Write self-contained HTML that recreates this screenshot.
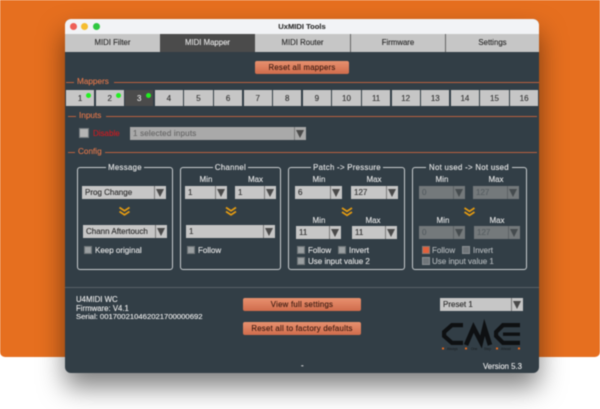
<!DOCTYPE html>
<html><head><meta charset="utf-8">
<style>
html,body{margin:0;padding:0;background:#fff}
body{width:600px;height:409px;position:relative;overflow:hidden;font-family:"Liberation Sans",sans-serif;font-size:7.8px;color:#e8e8e8}
#all{left:0;top:0;width:600px;height:409px;filter:blur(.4px);-webkit-text-stroke:.12px currentColor}
div,span{position:absolute;box-sizing:border-box;white-space:nowrap}
.or{left:0;top:0;width:600px;height:357px;background:#e66f1f;border-radius:0 0 5px 5px}
.win{left:65px;top:19px;width:474px;height:354px;background:#323e46;border-radius:6px;box-shadow:0 14px 26px rgba(0,0,0,.5);overflow:hidden}
.tb{left:65px;top:19px;width:474px;height:15px;background:#f2f3f6;border-radius:6px 6px 0 0;text-align:center;line-height:15px;color:#333;font-weight:bold;font-size:7.6px}
.dot{width:7px;height:7px;border-radius:50%;top:23px}
.tab{top:34px;height:18px;background:#c6c6c6;color:#2b2b2b;text-align:center;line-height:18px;border-left:1px solid #666;font-size:7.8px}
.btn{background:linear-gradient(#e8916f,#cf6c4c);color:#3a1a10;text-align:center;border-radius:2px;line-height:13px;font-size:7.8px;letter-spacing:.25px;height:13px}
.ln{height:1px;background:#b9603f}
.sec{color:#e0764a;font-size:8.2px;line-height:10px}
.m{top:90px;height:16px;width:28.2px;background:#c6c6c6;color:#333;text-align:center;line-height:17px;font-size:8px}
.g{width:5px;height:5px;border-radius:50%;background:#22ee22;top:92.5px}
.s{height:13px;background:#c6c6c6;color:#2c2c2c;line-height:13px;padding-left:3px;font-size:8px}
.s i{position:absolute;right:0;top:0;width:11px;height:13px;background:#c6c6c6;border-left:1px solid #7b7b7b}
.s i:after{content:"";position:absolute;left:1px;top:3px;border-left:4px solid transparent;border-right:4px solid transparent;border-top:8px solid #4a4a4a}
.d{background:#74797b;color:#555c60}
.d i{background:#74797b;border-left-color:#5c6164}
.d i:after{border-top-color:#454b4e}
.box{border:1px solid #c9cdcf;border-radius:3px;top:167px;height:103px}
.lg{top:163px;height:9px;background:#323e46;color:#e8e8e8;text-align:center;line-height:9px;font-size:7.8px;letter-spacing:.3px}
.t{line-height:9px;height:9px;font-size:8px;color:#e6e6e6}
.c{width:8px;height:8px;background:#9a9fa1;border:1.5px solid #6f7578}
.ctr{transform:translateX(-50%)}
svg{position:absolute;left:0;top:0}
</style></head><body><div id="all">
<div class="or"></div>
<div class="win"></div>
<div class="tb">UxMIDI Tools</div>
<div class="dot" style="left:69.5px;background:#ee5f57"></div>
<div class="dot" style="left:81px;background:#f5bd30"></div>
<div class="dot" style="left:93px;background:#2fc840"></div>

<div class="tab" style="left:65px;width:95px;border-left:0">MIDI Filter</div>
<div class="tab" style="left:160px;width:95px;background:#4b4b4b;color:#e4e4e4;border:0">MIDI Mapper</div>
<div class="tab" style="left:255px;width:95px;border:0">MIDI Router</div>
<div class="tab" style="left:350px;width:95px">Firmware</div>
<div class="tab" style="left:445px;width:94px">Settings</div>

<div class="btn" style="left:255px;top:61px;width:94px">Reset all mappers</div>

<div class="ln" style="left:66px;top:81.5px;width:8px"></div>
<div class="sec" style="left:77px;top:76.5px">Mappers</div>
<div class="ln" style="left:114px;top:81.5px;width:425px"></div>

<div class="m" style="left:66px">1</div>
<div class="m" style="left:95.6px">2</div>
<div class="m" style="left:125.2px;background:#4b4b4b;color:#e4e4e4">3</div>
<div class="m" style="left:154.8px">4</div>
<div class="m" style="left:184.4px">5</div>
<div class="m" style="left:214px">6</div>
<div class="m" style="left:243.6px">7</div>
<div class="m" style="left:273.2px">8</div>
<div class="m" style="left:302.8px">9</div>
<div class="m" style="left:332.4px">10</div>
<div class="m" style="left:362px">11</div>
<div class="m" style="left:391.6px">12</div>
<div class="m" style="left:421.2px">13</div>
<div class="m" style="left:450.8px">14</div>
<div class="m" style="left:480.4px">15</div>
<div class="m" style="left:510px">16</div>
<div class="g" style="left:86px"></div>
<div class="g" style="left:115.5px"></div>
<div class="g" style="left:145.5px"></div>

<div class="ln" style="left:68px;top:115.5px;width:8px"></div>
<div class="sec" style="left:79px;top:110.5px">Inputs</div>
<div class="ln" style="left:106px;top:115.5px;width:431px"></div>

<div class="c" style="left:79px;top:128px;width:10px;height:10px;background:#b4b4b4;border:1.5px solid #757b7e"></div>
<div class="t" style="left:93px;top:129px;color:#d01a20">Disable</div>
<div class="s" style="left:130px;top:127px;width:176px;background:#a9a9a9;color:#666;letter-spacing:.2px">1 selected inputs<i style="background:#a9a9a9"></i></div>

<div class="ln" style="left:68px;top:151.5px;width:7px"></div>
<div class="sec" style="left:78px;top:146.5px">Config</div>
<div class="ln" style="left:105px;top:151.5px;width:432px"></div>

<div class="box" style="left:77px;width:96px"></div>
<div class="lg" style="left:106px;width:38px">Message</div>
<div class="s" style="left:82px;top:186px;width:84px">Prog Change<i></i></div>
<div class="s" style="left:83px;top:225px;width:84px">Chann Aftertouch<i></i></div>
<div class="c" style="left:84px;top:246px"></div>
<div class="t" style="left:95px;top:246px">Keep original</div>

<div class="box" style="left:180px;width:101px"></div>
<div class="lg" style="left:213px;width:35px">Channel</div>
<div class="t ctr" style="left:206px;top:175px">Min</div>
<div class="t ctr" style="left:255.5px;top:175px">Max</div>
<div class="s" style="left:185px;top:186px;width:42px">1<i></i></div>
<div class="s" style="left:235px;top:186px;width:41px">1<i></i></div>
<div class="s" style="left:186px;top:225px;width:89px">1<i></i></div>
<div class="c" style="left:187px;top:246px"></div>
<div class="t" style="left:198px;top:246px">Follow</div>

<div class="box" style="left:288px;width:117px"></div>
<div class="lg" style="left:311px;width:72px">Patch -&gt; Pressure</div>
<div class="t ctr" style="left:319px;top:175px">Min</div>
<div class="t ctr" style="left:374px;top:175px">Max</div>
<div class="s" style="left:295px;top:186px;width:47px">6<i></i></div>
<div class="s" style="left:351px;top:186px;width:47px">127<i></i></div>
<div class="t ctr" style="left:319px;top:215.5px">Min</div>
<div class="t ctr" style="left:373px;top:215.5px">Max</div>
<div class="s" style="left:296px;top:226px;width:45px">11<i></i></div>
<div class="s" style="left:352px;top:226px;width:45px">11<i></i></div>
<div class="c" style="left:297px;top:246px"></div>
<div class="t" style="left:308px;top:246px">Follow</div>
<div class="c" style="left:338px;top:246px"></div>
<div class="t" style="left:349px;top:246px">Invert</div>
<div class="c" style="left:297px;top:257px"></div>
<div class="t" style="left:308px;top:257px">Use input value 2</div>

<div class="box" style="left:412px;width:115px"></div>
<div class="lg" style="left:426px;width:86px">Not used -&gt; Not used</div>
<div class="t ctr" style="left:442px;top:175px">Min</div>
<div class="t ctr" style="left:496px;top:175px">Max</div>
<div class="s d" style="left:419px;top:186px;width:46px">0<i></i></div>
<div class="s d" style="left:473px;top:186px;width:46px">127<i></i></div>
<div class="t ctr" style="left:443px;top:215.5px">Min</div>
<div class="t ctr" style="left:497px;top:215.5px">Max</div>
<div class="s d" style="left:419px;top:226px;width:46px">0<i></i></div>
<div class="s d" style="left:474px;top:226px;width:46px">127<i></i></div>
<div class="c" style="left:421.5px;top:246px;background:#e2603c;border-color:#8a7a72"></div>
<div class="t" style="left:432px;top:246px;color:#b4b9bc">Follow</div>
<div class="c" style="left:462px;top:246px;background:#70767a;border-color:#8a8f92"></div>
<div class="t" style="left:473px;top:246px;color:#b4b9bc">Invert</div>
<div class="c" style="left:421.5px;top:257px;background:#70767a;border-color:#8a8f92"></div>
<div class="t" style="left:432px;top:257px;color:#b4b9bc">Use input value 1</div>

<svg width="600" height="409" viewBox="0 0 600 409">
<g fill="none" stroke="#e39a12" stroke-width="1.7">
<path d="M119.5 207.5l5 3.3 5-3.3M119.5 211.5l5 3.3 5-3.3"/>
<path d="M226 207.5l5 3.3 5-3.3M226 211.5l5 3.3 5-3.3"/>
<path d="M342 208l5 3.300 5-3.300M342 212l5 3.300 5-3.300"/>
<path d="M464.500 208l5 3.300 5-3.300M464.500 212l5 3.300 5-3.300"/>
</g>
<g fill="none" stroke="#0e1012" stroke-width="4.2">
<path d="M463 325.100H452L444.100 332V336L452 342.900H463"/>
<path d="M466 345L473.500 327.500L481 342L484.500 327.500L490 345" stroke-width="4.6"/>
<path d="M520 325.100H503L496.100 332V336L503 342.900H520"/>
<path d="M503 334.200H520" stroke-width="3.400"/>
</g>
<g fill="#e0661f">
<rect x="442" y="347.500" width="2" height="2"/><rect x="465" y="347.500" width="2" height="2"/>
<rect x="496" y="347.500" width="2" height="2"/><rect x="518" y="347.500" width="2" height="2"/>
</g>
<g fill="#16191b" font-family="Liberation Sans" font-size="3.400">
<text x="447" y="350">Always</text><text x="471" y="350">One</text><text x="484" y="350">Step</text><text x="501" y="350">Ahead</text>
</g>
</svg>

<div style="left:65px;top:287px;width:474px;height:1px;background:#586067"></div>
<div class="t" style="left:76px;top:295px;color:#ececec;font-size:7.8px">U4MIDI WC</div>
<div class="t" style="left:76px;top:303.5px;color:#ececec;font-size:7.8px">Firmware: V4.1</div>
<div class="t" style="left:76px;top:312px;color:#ececec;font-size:7.7px">Serial: 001700210462021700000692</div>
<div class="btn" style="left:243px;top:298px;width:118px">View full settings</div>
<div class="btn" style="left:243px;top:322px;width:118px">Reset all to factory defaults</div>
<div class="s" style="left:440px;top:298px;width:83px">Preset 1<i></i></div>
<div class="t" style="left:301px;top:361px">-</div>
<div class="t" style="left:483px;top:361.5px;color:#ececec;font-size:7.8px">Version 5.3</div>
</div></body></html>
